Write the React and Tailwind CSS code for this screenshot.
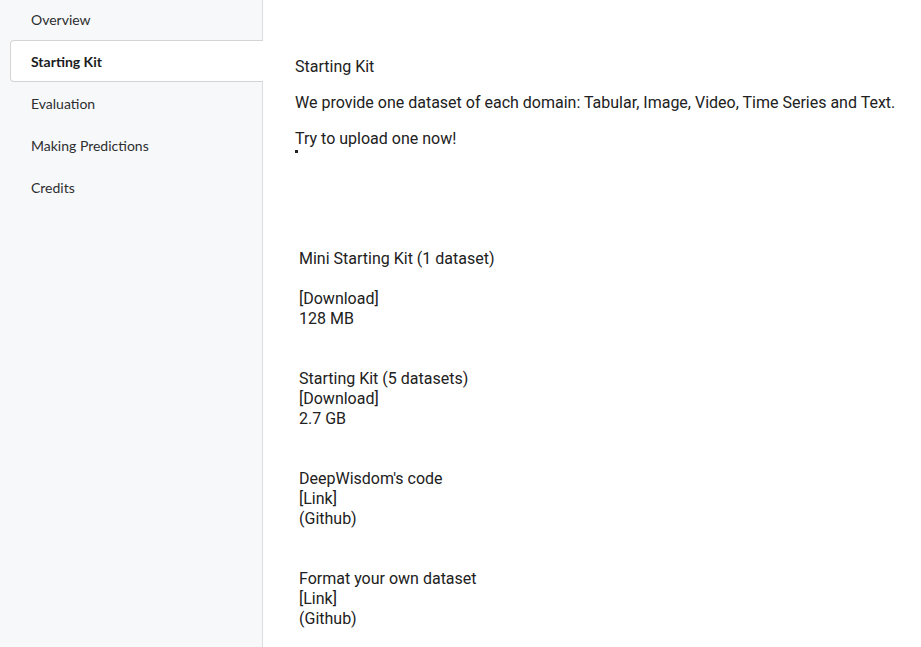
import React from "react";

const navItems = ["Overview", "Starting Kit", "Evaluation", "Making Predictions", "Credits"];

const kits = [
    {title: "Mini Starting Kit (1 dataset)", lines: ["", "[Download]", "128 MB"]},
    {title: "Starting Kit (5 datasets)", lines: ["[Download]", "2.7 GB"]},
    {title: "DeepWisdom's code", lines: ["[Link]", "(Github)"]},
    {title: "Format your own dataset", lines: ["[Link]", "(Github)"]},
];

function Sidebar({active}) {
    return (
        <div className="w-[263px] shrink-0 bg-[#f7f8fa] border-r border-[#dcdddf] min-h-[647px] pl-[10px] pt-0"
             style={{fontFamily: "Lato, 'Open Sans', sans-serif"}}>
            {navItems.map((item, i) => (
                <div key={item}
                     className={
                         item === active
                             ? "h-[42px] flex items-center pl-[20px] text-[14px] font-bold text-[#1b1c1d] bg-white border border-r-0 border-[#d4d4d5] rounded-l-[4px] -mr-px"
                             : "h-[42px] flex items-center pl-[21px] text-[14px] text-[#2d2e30]"
                     }
                     style={i === 0 ? {marginTop: "-2px"} : undefined}>
                    {item}
                </div>
            ))}
        </div>
    );
}

function App() {
    return (
        <div className="flex w-[921px] h-[647px] overflow-hidden bg-white">
            <Sidebar active="Starting Kit"/>
            <div className="flex-1 pl-[32px] pt-[57px] text-[16px] leading-[20px] text-[#212121]"
                 style={{fontFamily: "Roboto, 'Liberation Sans', sans-serif"}}>
                <p>Starting Kit</p>
                <p className="mt-[16px]">We provide one dataset of each domain: Tabular, Image, Video, Time Series and Text.</p>
                <p className="mt-[16px]">Try to upload one now!</p>
                <span className="block w-[3px] h-[3px] bg-[#222] mt-px"></span>
                <div className="pl-[4px] mt-[96px] flex flex-col gap-[40px]">
                    {kits.map((kit) => (
                        <div key={kit.title}>
                            <div>{kit.title}</div>
                            {kit.lines.map((line, j) => (
                                <div key={j} className="h-[20px]">{line}</div>
                            ))}
                        </div>
                    ))}
                </div>
            </div>
        </div>
    );
}

export default App;
